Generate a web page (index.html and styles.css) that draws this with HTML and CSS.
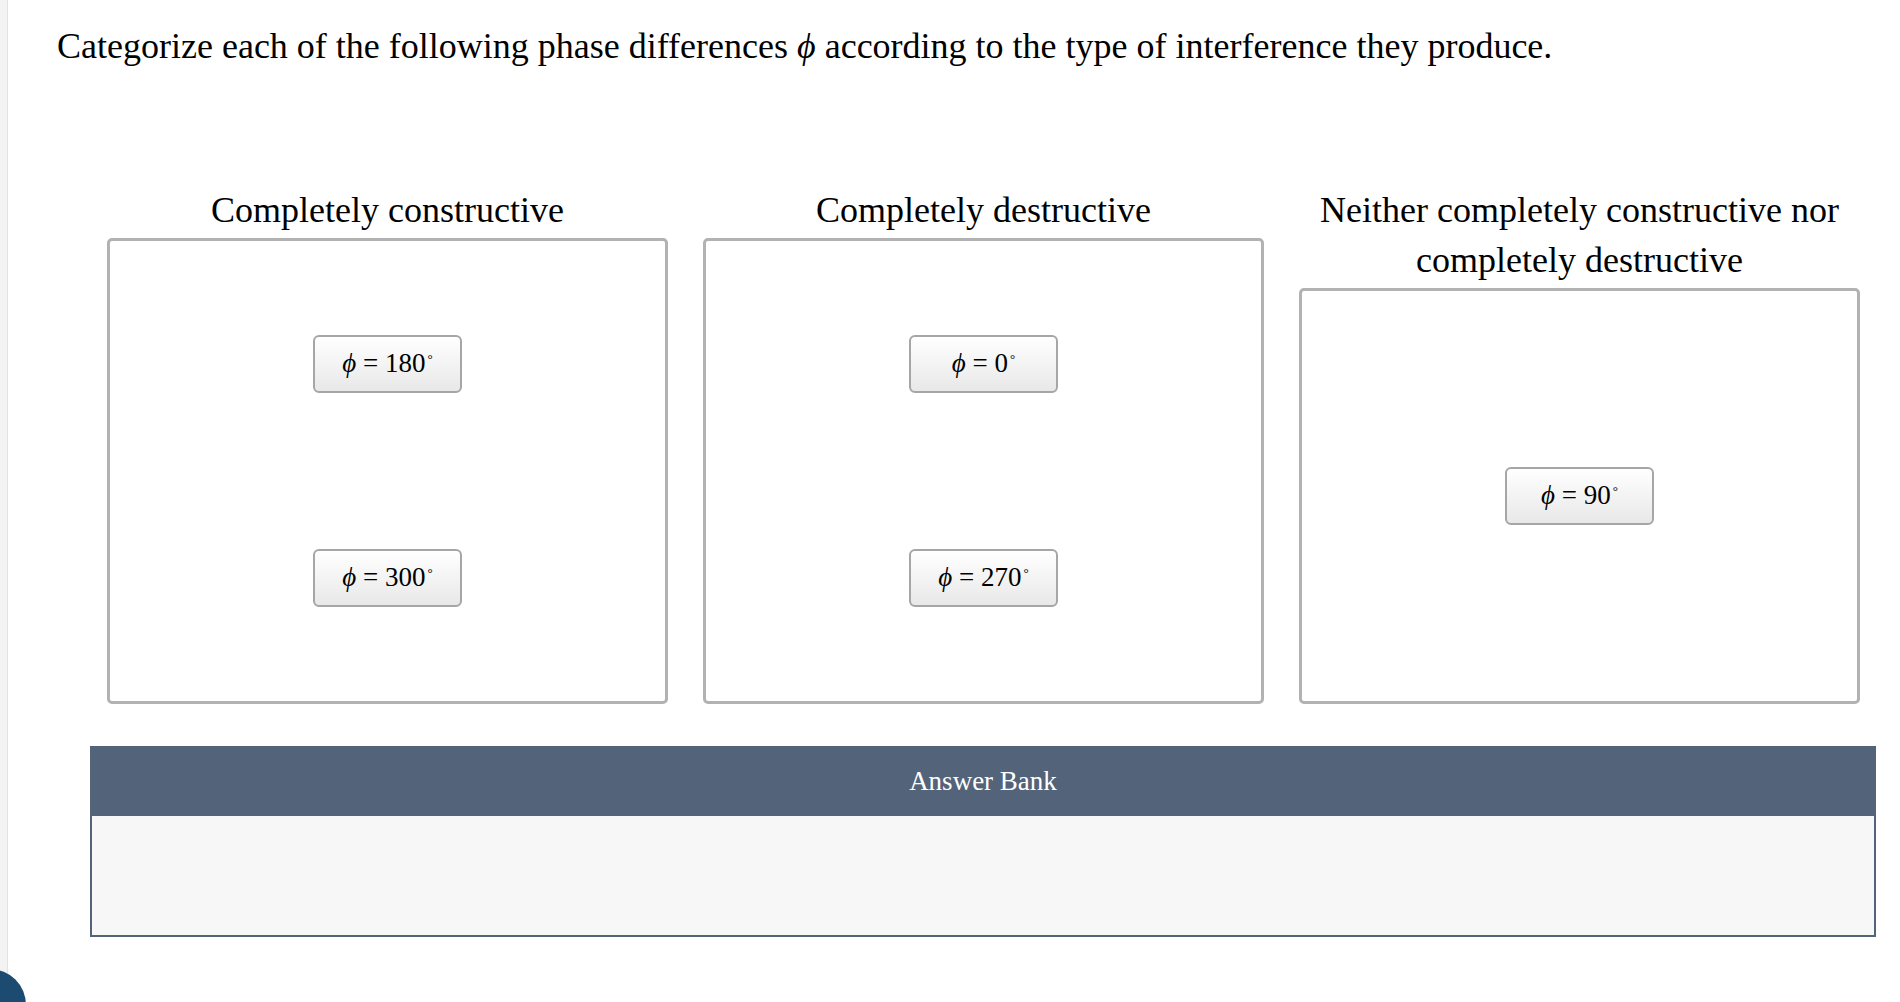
FILE: index.html
```html
<!DOCTYPE html>
<html lang="en">
<head>
  <meta charset="UTF-8">
  <meta name="viewport" content="width=device-width, initial-scale=1.0">
  <title>Categorize Phase Differences</title>
  <link rel="stylesheet" href="styles.css">
</head>
<body>
  <div class="rail"></div>
  <main class="question">
    <p class="prompt">Categorize each of the following phase differences <i class="phi">ϕ</i> according to the type of interference they produce.</p>

    <div class="categories">
      <div class="category">
        <div class="category-title">Completely constructive</div>
        <div class="drop-zone">
          <div class="chip"><span class="chip-label"><i class="phi">ϕ</i> = 180<sup class="deg">°</sup></span></div>
          <div class="chip"><span class="chip-label"><i class="phi">ϕ</i> = 300<sup class="deg">°</sup></span></div>
        </div>
      </div>
      <div class="category">
        <div class="category-title">Completely destructive</div>
        <div class="drop-zone">
          <div class="chip"><span class="chip-label"><i class="phi">ϕ</i> = 0<sup class="deg">°</sup></span></div>
          <div class="chip"><span class="chip-label"><i class="phi">ϕ</i> = 270<sup class="deg">°</sup></span></div>
        </div>
      </div>
      <div class="category">
        <div class="category-title">Neither completely constructive nor completely destructive</div>
        <div class="drop-zone">
          <div class="chip"><span class="chip-label"><i class="phi">ϕ</i> = 90<sup class="deg">°</sup></span></div>
        </div>
      </div>
    </div>

    <div class="answer-bank">
      <div class="answer-bank-header">Answer Bank</div>
      <div class="answer-bank-body"></div>
    </div>
  </main>
  <div class="help-bubble"></div>
</body>
</html>
```

FILE: styles.css
```css
html, body {
  margin: 0;
  padding: 0;
}
body {
  display: flex;
  min-height: 100vh;
  background: #ffffff;
  font-family: "Liberation Serif", "Times New Roman", serif;
  color: #000000;
  overflow: hidden;
}
.rail {
  width: 8px;
  flex-shrink: 0;
  box-sizing: border-box;
  background: #f3f3f3;
  border-right: 1px solid #e3e3e3;
}
.question {
  flex: 1;
  padding: 25px 24px 0 49px;
}
.prompt {
  margin: 0;
  font-size: 36px;
}
.phi {
  font-style: italic;
}
.categories {
  display: flex;
  gap: 35px;
  margin: 118px 16px 0 50px;
}
.category {
  flex: 1;
  display: flex;
  flex-direction: column;
}
.category-title {
  font-size: 36px;
  line-height: 50px;
  text-align: center;
  margin-bottom: 3px;
}
.drop-zone {
  flex: 1;
  min-height: 416px;
  box-sizing: border-box;
  border: 3px solid #b2b2b2;
  border-radius: 5px;
  display: flex;
  flex-direction: column;
  justify-content: center;
  align-items: center;
  gap: 156px;
}
.chip {
  width: 149px;
  height: 58px;
  box-sizing: border-box;
  border: 2px solid #a6a6a6;
  border-radius: 6px;
  background: linear-gradient(#ffffff, #e8e8e8);
  display: flex;
  justify-content: center;
  align-items: center;
}
.chip-label {
  font-size: 27px;
  line-height: 30px;
  padding-bottom: 6px;
}
.deg {
  font-size: 13px;
  vertical-align: 9px;
  margin-left: 2px;
}
.answer-bank {
  margin: 42px 0 0 33px;
}
.answer-bank-header {
  height: 70px;
  line-height: 70px;
  background: #536379;
  color: #ffffff;
  text-align: center;
  font-size: 27px;
}
.answer-bank-body {
  height: 121px;
  box-sizing: border-box;
  background: #f7f7f7;
  border: 2px solid #536379;
  border-top: none;
}
.help-bubble {
  position: fixed;
  left: -46px;
  top: 969px;
  width: 72px;
  height: 72px;
  border-radius: 50%;
  background: #1c4b72;
}
```
